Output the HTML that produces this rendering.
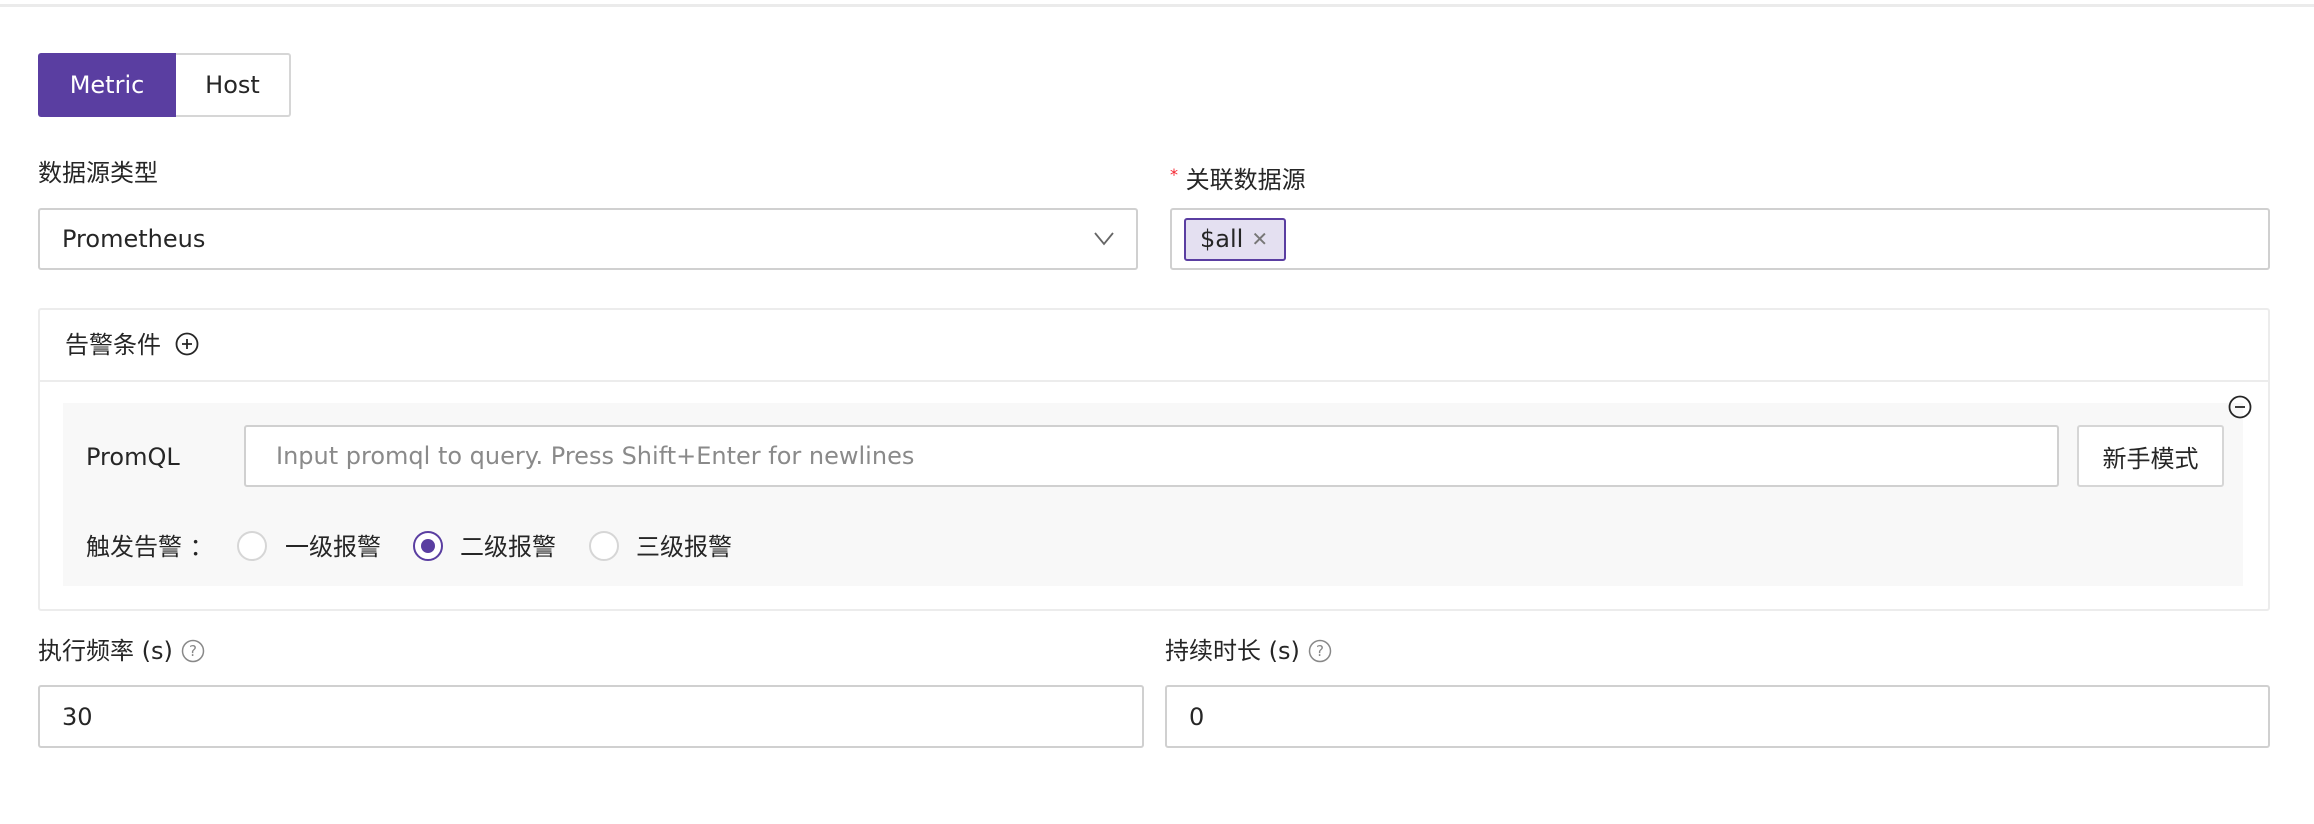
<!DOCTYPE html>
<html><head><meta charset="utf-8"><style>
*{box-sizing:border-box;margin:0;padding:0}
body{width:2314px;height:824px;background:#fff;position:relative;overflow:hidden;font-family:"DejaVu Sans","Noto Sans CJK SC",sans-serif;color:#262626;font-size:24px}
.a{position:absolute}
.inp{position:absolute;border:2px solid #d0d0d0;border-radius:3px;background:#fff;display:flex;align-items:center;padding-left:22px}
.lbl{position:absolute;font-size:24px;line-height:30px}
.radio{position:absolute;width:30px;height:30px;border:2px solid #d6d6d6;border-radius:50%;background:#fff}
</style></head><body>
<div class="a" style="left:0;top:4px;width:2314px;height:3px;background:#ebebeb"></div>

<div class="a" style="left:38px;top:53px;width:138px;height:64px;background:#5a3ea1;border-radius:3px 0 0 3px;color:#fff;display:flex;align-items:center;justify-content:center">Metric</div>
<div class="a" style="left:176px;top:53px;width:115px;height:64px;border:2px solid #d6d6d6;border-left:none;border-radius:0 3px 3px 0;display:flex;align-items:center;justify-content:center">Host</div>

<div class="lbl" style="left:38px;top:158px">数据源类型</div>
<div class="inp" style="left:38px;top:208px;width:1100px;height:62px">Prometheus
<svg class="a" style="right:22px;top:22px" width="20" height="14" viewBox="0 0 20 14"><path d="M1 1L10 12L19 1" fill="none" stroke="#666" stroke-width="1.8"/></svg></div>

<div class="lbl" style="left:1170px;top:160px"><span style="color:#f5222d;font-size:16px;vertical-align:8px">*</span> 关联数据源</div>
<div class="inp" style="left:1170px;top:208px;width:1100px;height:62px;padding-left:12px">
<div style="width:102px;height:43px;background:#e4e0f1;border:2px solid #5a3ea1;border-radius:3px;display:flex;align-items:center;padding-left:14px">$all<span style="color:#777;font-size:20px;margin-left:8px">✕</span></div></div>

<div class="a" style="left:38px;top:308px;width:2232px;height:303px;border:2px solid #ececec;border-radius:3px"></div>
<div class="a" style="left:38px;top:380px;width:2232px;height:2px;background:#ececec"></div>
<div class="lbl" style="left:65px;top:330px">告警条件</div>
<svg class="a" style="left:175px;top:332px" width="24" height="24" viewBox="0 0 24 24"><circle cx="12" cy="12" r="10.5" fill="none" stroke="#262626" stroke-width="1.8"/><path d="M12 7v10M7 12h10" stroke="#262626" stroke-width="1.8"/></svg>

<div class="a" style="left:63px;top:403px;width:2180px;height:183px;background:#f8f8f8"></div>
<svg class="a" style="left:2228px;top:395px" width="24" height="24" viewBox="0 0 24 24"><circle cx="12" cy="12" r="10.5" fill="none" stroke="#262626" stroke-width="1.8"/><path d="M7 12h10" stroke="#262626" stroke-width="1.8"/></svg>
<div class="lbl" style="left:86px;top:442px">PromQL</div>
<div class="inp" style="left:244px;top:425px;width:1815px;height:62px;padding-left:30px;color:#8a8a8a">Input promql to query. Press Shift+Enter for newlines</div>
<div class="a" style="left:2077px;top:425px;width:147px;height:62px;border:2px solid #d6d6d6;border-radius:3px;background:#fff;display:flex;align-items:center;justify-content:center">新手模式</div>

<div class="lbl" style="left:86px;top:532px">触发告警 ：</div>
<div class="radio" style="left:237px;top:531px"></div>
<div class="lbl" style="left:285px;top:532px">一级报警</div>
<div class="radio" style="left:413px;top:531px;border-color:#5a3ea1"><div style="position:absolute;left:6px;top:6px;width:14px;height:14px;border-radius:50%;background:#5a3ea1"></div></div>
<div class="lbl" style="left:460px;top:532px">二级报警</div>
<div class="radio" style="left:589px;top:531px"></div>
<div class="lbl" style="left:636px;top:532px">三级报警</div>

<div class="lbl" style="left:38px;top:636px">执行频率 (s) <svg style="vertical-align:-4px" width="24" height="24" viewBox="0 0 24 24"><circle cx="12" cy="12" r="10.5" fill="none" stroke="#888" stroke-width="1.5"/><text x="12" y="17" text-anchor="middle" font-size="15" fill="#888" font-family="DejaVu Sans">?</text></svg></div>
<div class="lbl" style="left:1165px;top:636px">持续时长 (s) <svg style="vertical-align:-4px" width="24" height="24" viewBox="0 0 24 24"><circle cx="12" cy="12" r="10.5" fill="none" stroke="#888" stroke-width="1.5"/><text x="12" y="17" text-anchor="middle" font-size="15" fill="#888" font-family="DejaVu Sans">?</text></svg></div>
<div class="inp" style="left:38px;top:685px;width:1106px;height:63px">30</div>
<div class="inp" style="left:1165px;top:685px;width:1105px;height:63px">0</div>
</body></html>
